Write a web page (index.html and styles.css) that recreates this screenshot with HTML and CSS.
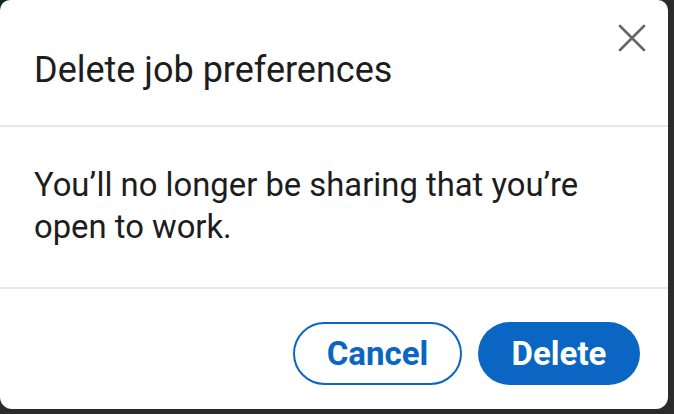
FILE: index.html
```html
<!DOCTYPE html>
<html lang="en">
<head>
<meta charset="utf-8">
<title>Delete job preferences</title>
<link rel="stylesheet" href="styles.css">
</head>
<body>
<div class="modal" role="dialog" aria-labelledby="modal-title">
  <button class="close" aria-label="Dismiss">
    <svg width="28" height="28" viewBox="0 0 28 28"><path d="M2 2 L26 26 M26 2 L2 26" stroke="#666" stroke-width="2.6" stroke-linecap="round" fill="none"/></svg>
  </button>
  <header class="modal-header">
    <h2 id="modal-title" class="title">Delete job preferences</h2>
  </header>
  <div class="modal-body">
    <p class="text">You’ll no longer be sharing that you’re open to work.</p>
  </div>
  <footer class="modal-footer">
    <button class="btn btn-secondary">Cancel</button>
    <button class="btn btn-primary">Delete</button>
  </footer>
</div>
</body>
</html>
```

FILE: styles.css
```css
html, body {
  margin: 0;
  padding: 0;
}
body {
  width: 674px;
  height: 414px;
  background: radial-gradient(circle at 0 0, #0c2b1c 0, #0c2b1c 14px, #2b2b2b 15px);
  font-family: Roboto, "Noto Sans", sans-serif;
  overflow: hidden;
}
.modal {
  position: relative;
  width: 668px;
  height: 409px;
  background: #fff;
  border-radius: 10px 10px 12px 12px;
  display: flex;
  flex-direction: column;
  box-sizing: border-box;
}
.close {
  position: absolute;
  top: 24px;
  right: 22px;
  width: 28px;
  height: 28px;
  padding: 0;
  border: 0;
  background: none;
  display: flex;
}
.modal-header {
  height: 127px;
  box-sizing: border-box;
  border-bottom: 2px solid #e8e8e8;
  padding: 50px 34px 0;
}
.title {
  margin: 0;
  font-size: 36px;
  line-height: 40px;
  font-weight: 400;
  color: #1d1d1d;
}
.modal-body {
  height: 162px;
  box-sizing: border-box;
  border-bottom: 2px solid #e8e8e8;
  padding: 37px 34px 0;
}
.text {
  margin: 0;
  font-size: 32.8px;
  line-height: 42px;
  color: #1d1d1d;
  width: 580px;
}
.modal-footer {
  flex: 1;
  display: flex;
  justify-content: flex-end;
  align-items: flex-start;
  gap: 16px;
  padding: 33px 28px 0;
}
.btn {
  height: 63px;
  border-radius: 32px;
  font-family: inherit;
  font-size: 33px;
  font-weight: 700;
  box-sizing: border-box;
  padding: 0;
}
.btn-secondary {
  width: 169px;
  background: #fff;
  color: #0a66c2;
  border: 2px solid #0a66c2;
}
.btn-primary {
  width: 162px;
  background: #0a66c2;
  color: #fff;
  border: 0;
}
```
